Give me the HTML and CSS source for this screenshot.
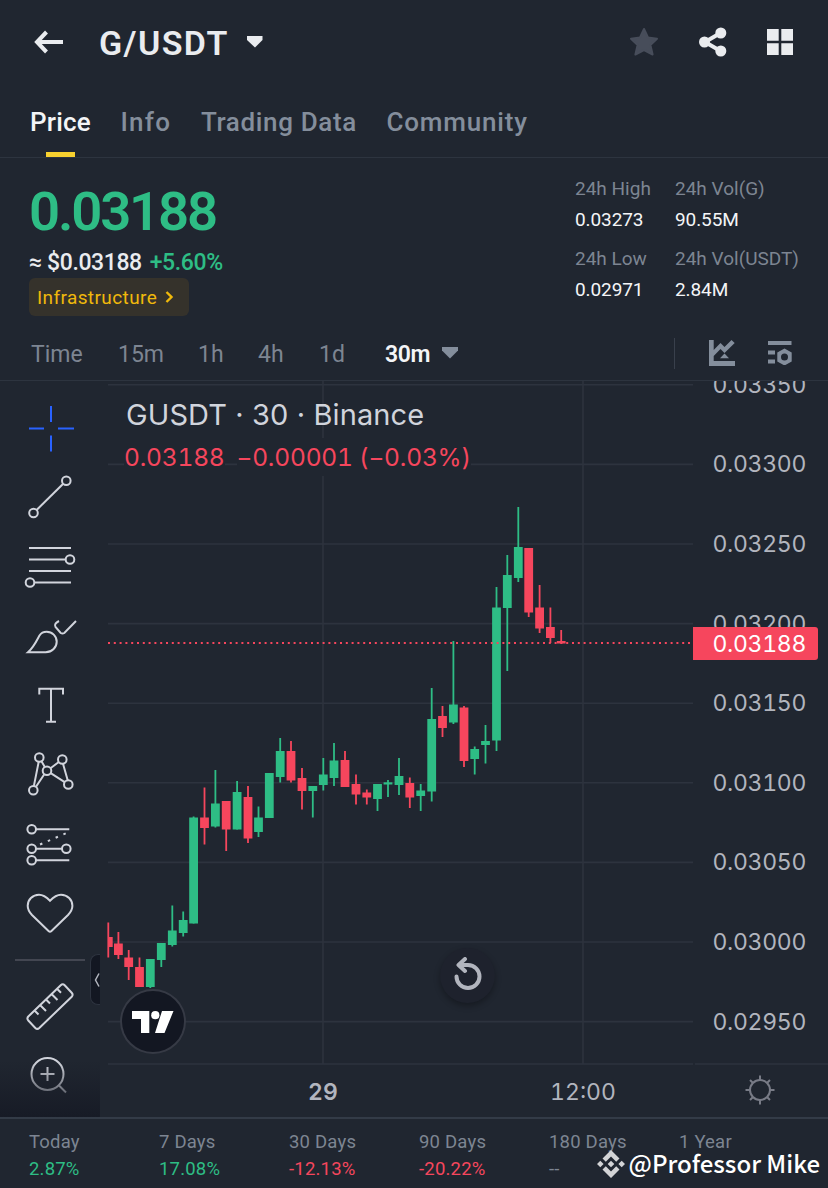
FILE: index.html
```html
<!doctype html>
<html lang="en">

<head>
	<meta charset="UTF-8" />
	<meta name="viewport" content="width=device-width, initial-scale=1.0" />
	<title>G/USDT</title>
	<link rel="stylesheet" href="styles.css">
</head>

<body>
	<header class="header">
		<svg class="back" width="30" height="24" viewBox="0 0 30 24">
			<path d="M29 12H3M12.500 2L3 12l9.500 10" />
		</svg>
		<h1>G/USDT</h1>
		<svg class="caret" width="16" height="12" viewBox="0 0 16 12">
			<path d="M0 0h15.500v4L8 11.500 0 4z" />
		</svg>
		<div class="header-icons">
			<svg width="30" height="30" viewBox="0 0 30 30">
				<path class="star" d="M15 2l4 8.500 9 1.200-6.600 6.300 2.200 9.500L15 23l-8.600 4.500L8.600 18 2 11.700l9-1.200z" />
			</svg>
			<svg width="30" height="30" viewBox="0 0 30 30">
				<path class="share-line" d="M22.500 6L7 15l15.500 9" />
				<circle cx="22.800" cy="6" r="5.500" />
				<circle cx="6.500" cy="15" r="5.500" />
				<circle cx="22.800" cy="24" r="5.500" />
			</svg>
			<svg width="26" height="26" viewBox="0 0 26 26">
				<path d="M0 0h11.700v11.700H0zM14.300 0H26v11.700H14.300zM0 14.300h11.700V26H0zM14.300 14.300H26V26H14.300z" />
			</svg>
		</div>
	</header>

	<nav class="tabs">
		<a class="tab active">Price</a>
		<a class="tab info">Info</a>
		<a class="tab trading">Trading Data</a>
		<a class="tab community">Community</a>
	</nav>

	<section class="summary">
		<div class="quote">
			<div class="price">0.03188</div>
			<div class="approx"><span class="usd">≈ $0.03188</span><span class="change">+5.60%</span></div>
			<a class="tag">
				<span>Infrastructure</span>
				<svg width="9" height="12" viewBox="0 0 9 12">
					<path d="M1.500 1l5 5-5 5" />
				</svg>
			</a>
		</div>
		<dl class="stats">
			<div><dt>24h High</dt><dd>0.03273</dd></div>
			<div><dt>24h Vol(G)</dt><dd>90.55M</dd></div>
			<div><dt>24h Low</dt><dd>0.02971</dd></div>
			<div><dt>24h Vol(USDT)</dt><dd>2.84M</dd></div>
		</dl>
	</section>

	<div class="intervals">
		<span class="i-time">Time</span>
		<span class="i-15">15m</span>
		<span class="i-1h">1h</span>
		<span class="i-4h">4h</span>
		<span class="i-1d">1d</span>
		<span class="selected">30m</span>
		<svg class="caret" width="16" height="12" viewBox="0 0 16 12">
			<path d="M0 0h16v3.500L8 11.500 0 3.500z" />
		</svg>
		<div class="chart-options">
			<svg width="26" height="26" viewBox="0 0 26 26">
				<path d="M0 0h4.700v10L11.500 3l4 4L22.500 0l3.200 3L15.500 13l-4-4L4.700 16v5H26v5H0z" />
				<path d="M15.500 13.500l4.500 4.800h-9z" />
			</svg>
			<svg width="24" height="24" viewBox="0 0 24 24">
				<path d="M0 0h23.500v4H0zM0 9.500h7v4H0zM0 18.500h7v4H0z" />
				<path fill-rule="evenodd" d="M16.500 7.500l7.200 4v9l-7.200 4-7.200-4v-9zM16.500 12.500a3.500 3.500 0 1 0 0 7 3.500 3.500 0 0 0 0-7z" />
			</svg>
		</div>
	</div>

	<main class="chart">
		<aside class="tools">
			<svg class="tool cross" viewBox="0 0 60 60"><path d="M9 30.500h15M38 30.500h16M31 8v16M31 37.500v16" /></svg>
			<svg class="tool" viewBox="0 0 60 60">
				<path d="M16.600 43L43.200 16.800" />
				<circle cx="46.300" cy="13.700" r="4.300" />
				<circle cx="13.500" cy="46" r="4.300" />
			</svg>
			<svg class="tool" viewBox="0 0 60 60">
				<path d="M9 11h42M9 22.500h36.700M9 34h42M14.300 45.500H51" />
				<circle cx="50" cy="22.500" r="4.300" />
				<circle cx="10" cy="45.500" r="4.300" />
			</svg>
			<svg class="tool" viewBox="0 0 60 60">
				<path d="M8 46.300C14 41 17 34 19.500 29.500 21 27 23.500 25.700 26.700 25.700c5.500 0 10 4.500 10 10s-4.500 10.600-11 10.600zM39 15c-3 1.500-5 3.500-3.500 6l5.200 6q1.800 1.200 3.600 0L56 15" />
			</svg>
			<svg class="tool" viewBox="0 0 60 60"><path d="M19.300 19.500v-5.800H43v5.800M31 13.700v33M26 46.700h10" /></svg>
			<svg class="tool" viewBox="0 0 60 60">
				<path d="M21.500 17.200l3.300 5.900M30.500 24.300l8.300-6.300M43 19.800l4.700 16.400M30.700 29.100l14 9.100M24.300 30.300l-8.300 12.500M18.700 17.800l-4.800 24.100" />
				<circle cx="19.300" cy="13.500" r="4.300" />
				<circle cx="42.300" cy="15.500" r="4.300" />
				<circle cx="27" cy="26.800" r="4.300" />
				<circle cx="48.300" cy="40.500" r="4.300" />
				<circle cx="13.300" cy="46.200" r="4.300" />
			</svg>
			<svg class="tool" viewBox="0 0 60 60">
				<path d="M16 15.300h33.300M16 34.700h26M16 46.300h33.300" />
				<path stroke-dasharray="2.500 6" d="M45.700 19.300L19 31" />
				<circle cx="11.700" cy="15.300" r="4.300" />
				<circle cx="11.700" cy="34.700" r="4.300" />
				<circle cx="46.300" cy="34.700" r="4.300" />
				<circle cx="11.700" cy="46.300" r="4.300" />
			</svg>
			<svg class="tool" viewBox="0 0 60 60">
				<path d="M30 17.700C26 13.500 23 11.700 19 11.700c-6.500 0-11.300 5-11.300 11 0 4 1.500 6.300 4.300 9.300l16.500 16q1.500 1.200 3 0L48 32c2.800-3 4.400-5.300 4.400-9.300 0-6-4.900-11-11.400-11-4 0-7 1.800-11 6z" />
			</svg>
			<hr>
			<svg class="tool" viewBox="0 0 60 60">
				<path d="M40.700 9.300q2-2 4 0l7 7.500q1.800 2 0 4L19.300 52q-2 1.800-4 0l-7-7.500q-1.800-2 0-4zM14.500 34.500l4 4M20 29l6 6M26 23.500l4 4M31.500 18l6 6M37 12.700l4 4" />
			</svg>
			<svg class="tool" viewBox="0 0 60 60">
				<circle cx="27.500" cy="29" r="16" />
				<path d="M27.500 22v14M20.500 29h14M39 40.500l7 7" />
			</svg>
			<div class="collapse">
				<svg width="6" height="14" viewBox="0 0 6 14"><path d="M5 .5L1.500 7 5 13.500" /></svg>
			</div>
		</aside>

		<div class="plot">
			<svg class="plot-svg" width="728" height="736" viewBox="100 381 728 736">
				<g id="grid" class="grid"></g>
				<g id="candles"></g>
				<path class="last-line" d="M108 643h585" />
				<g id="price-axis" class="axis"></g>
				<path class="last-tag" d="M693 627h122q3 0 3 3v27q0 3-3 3H693z" />
				<text class="axis last-value" x="712.500" y="651.500">0.03188</text>
				<text class="axis time bold" x="323" y="1100">29</text>
				<text class="axis time" x="583" y="1100">12:00</text>
				<g class="settings" transform="translate(760 1090)">
					<circle r="10" />
					<path d="M0-10v-4.500M0 10v4.500M-10 0h-4.500M10 0h4.500M-7-7l-3-3M7-7l3-3M-7 7l-3 3M7 7l3 3" />
				</g>
			</svg>
			<div class="legend">
				<div class="legend-title">GUSDT · 30 · Binance</div>
				<div class="legend-values"><span>0.03188</span><span>−0.00001 (−0.03%)</span></div>
			</div>
			<div class="tv-logo">
				<svg width="42" height="22" viewBox="0 0 42 22">
					<path d="M0 0h17.300v22H9V8H0zM30 0h11.500L32.500 22h-9.500z" />
					<circle cx="23.300" cy="4.200" r="4.100" />
				</svg>
			</div>
			<div class="reset">
				<svg width="32" height="36" viewBox="0 0 32 36">
					<path d="M4.500 19.500A11.500 11.500 0 1 0 16 8H7M13 2L6.500 8l6.500 6" />
				</svg>
			</div>
		</div>
	</main>

	<footer class="performance">
		<div class="up"><span>Today</span><b>2.87%</b></div>
		<div class="up"><span>7 Days</span><b>17.08%</b></div>
		<div class="down"><span>30 Days</span><b>-12.13%</b></div>
		<div class="down"><span>90 Days</span><b>-20.22%</b></div>
		<div><span>180 Days</span><b>--</b></div>
		<div><span>1 Year</span><b>--</b></div>
		<div class="watermark">
			<svg width="28" height="28" viewBox="0 0 28 28">
				<path d="M14 0l8.500 8.500-3.300 3.300L14 6.600l-5.200 5.200-3.300-3.300zM3.300 10.700L6.600 14l-3.300 3.300L0 14zM24.700 10.700L28 14l-3.300 3.300-3.300-3.300zM14 10.700l3.300 3.300-3.300 3.300-3.300-3.300zM8.800 16.200l5.200 5.200 5.200-5.200 3.300 3.300L14 28l-8.500-8.500z" />
			</svg>
			<span>@Professor Mike</span>
		</div>
	</footer>

	<script>
		// x, high, body top, body bottom, low, direction
		const candles = [
			[108.3, 922.5, 937, 947, 957.5, 0],
			[118.4, 932, 943.5, 955, 959, 0],
			[128.7, 950, 957.5, 967, 980, 0],
			[139.5, 957.5, 967, 987, 987, 0],
			[150.3, 959, 959, 987, 988, 1],
			[161.3, 943, 943, 960, 967, 1],
			[172.3, 905.5, 930.5, 945, 946.5, 1],
			[183.2, 911.5, 920, 933, 936.5, 1],
			[193.6, 816.5, 817.5, 923.5, 923.5, 1],
			[204.5, 787.5, 817.5, 828, 844.5, 0],
			[215.4, 770, 803.5, 826.5, 827.5, 1],
			[226.2, 801, 801, 829.5, 851, 0],
			[237.1, 781, 792, 829.5, 829.5, 1],
			[248, 786, 797, 838.5, 843, 0],
			[258.5, 806.5, 817.5, 832, 837, 1],
			[269.3, 773, 773, 818, 818, 1],
			[280.2, 738, 751, 777, 782.5, 1],
			[291, 741, 751, 780.5, 782.5, 0],
			[302, 768, 778, 791, 809.5, 0],
			[312.8, 786, 786, 791, 817.5, 1],
			[323.3, 758, 774.5, 785, 790.5, 1],
			[334, 743, 760.5, 778, 786, 1],
			[345, 751, 760, 787, 787, 0],
			[356, 774.5, 784, 794.5, 804.5, 0],
			[366.8, 789.5, 792.5, 797.5, 804.5, 0],
			[377.5, 784, 784, 799, 811, 1],
			[388, 780, 782.3, 784.5, 797, 1],
			[399, 758, 776, 785, 795, 1],
			[409.8, 777.5, 783, 797.5, 808, 0],
			[420.7, 784, 790.5, 796, 811, 1],
			[431.7, 688, 719, 791.5, 801.5, 1],
			[442.5, 706, 716, 728, 737, 0],
			[453.4, 641, 704.5, 722.5, 724, 1],
			[464, 706, 707.5, 761, 767, 0],
			[474.7, 746.5, 749, 759, 774.5, 1],
			[485.5, 725, 741, 745, 763.5, 1],
			[496.5, 587, 607.5, 740.5, 751, 1],
			[507.3, 555, 575, 608, 671, 1],
			[518.3, 507, 547, 578, 582, 1],
			[528.7, 548, 548, 612.5, 617, 0],
			[539.6, 585, 607.5, 628.5, 633, 0],
			[550.4, 607.5, 627, 638, 643, 0],
			[561.2, 630, 641, 643.5, 643.5, 0]
		];

		document.getElementById('candles').innerHTML = candles.map(([x, high, top, bottom, low, up]) => {
			const left = Math.max(x - 4.4, 108);
			return `<g class="${up ? 'candle-up' : 'candle-down'}">
				<rect x="${x - 0.9}" y="${high}" width="1.8" height="${low - high}" />
				<rect x="${left}" y="${top}" width="${x + 4.4 - left}" height="${bottom - top}" />
			</g>`;
		}).join('');

		const prices = ['0.03350', '0.03300', '0.03250', '0.03200', '0.03150', '0.03100', '0.03050', '0.03000', '0.02950'];
		const step = 79.6;
		let lines = '';
		let labels = '';
		prices.forEach((price, i) => {
			const y = 384.8 + i * step;
			lines += `<path d="M108 ${y}h585" />`;
			labels += `<text x="712.5" y="${y + 8}">${price}</text>`;
		});
		lines += '<path d="M323 381v683M583 381v683M108 1064h585M695 1064h133" />';
		document.getElementById('grid').innerHTML = lines;
		document.getElementById('price-axis').innerHTML = labels;
	</script>
</body>

</html>
```
FILE: styles.css
```css
* {
	margin: 0;
	padding: 0;
	box-sizing: border-box;
}

body {
	width: 828px;
	height: 1188px;
	overflow: hidden;
	background-color: #202630;
	color: #eaecef;
	font-family: Roboto, "Liberation Sans", sans-serif;
}

svg {
	display: block;
	flex: none;
}

.header {
	height: 84px;
	padding: 0 35px 0 34px;
	display: flex;
	align-items: center;
	fill: #eaecef;
}

.back {
	fill: none;
	stroke: #eaecef;
	stroke-width: 4;
}

h1 {
	width: 148px;
	margin-left: 35px;
	padding-top: 2px;
	font-size: 34px;
	font-weight: 600;
	letter-spacing: 1.4px;
	white-space: nowrap;
}

.header-icons {
	margin-left: auto;
	display: flex;
	align-items: center;
	gap: 39px;
}

.star {
	fill: #474d5a;
	stroke: #474d5a;
	stroke-width: 2;
	stroke-linejoin: round;
}

.share-line {
	fill: none;
	stroke: #eaecef;
	stroke-width: 4;
}

.tabs {
	height: 74px;
	padding-left: 30px;
	display: flex;
	gap: 29.5px;
	border-bottom: 1px solid #2d343f;
}

.tab {
	position: relative;
	height: 73px;
	line-height: 77px;
	font-size: 26px;
	font-weight: 500;
	letter-spacing: 0.65px;
	color: #848e9c;
	white-space: nowrap;
}

.tab.active {
	letter-spacing: 0.2px;
	color: #f4f5f7;
}

.tab.info {
	letter-spacing: 1.3px;
}

.tab.community {
	letter-spacing: 0.8px;
}

.tab.active::after {
	content: "";
	position: absolute;
	left: 50%;
	bottom: 0;
	width: 29px;
	height: 5px;
	margin-left: -14px;
	background-color: #f8d12f;
}

.summary {
	height: 168px;
	padding-left: 29px;
	display: flex;
	justify-content: space-between;
}

.price {
	margin-top: 21px;
	height: 64px;
	line-height: 64px;
	font-size: 54.5px;
	font-weight: 600;
	letter-spacing: -2.2px;
	color: #2ebd85;
}

.approx {
	height: 35px;
	line-height: 40px;
	font-size: 23px;
	font-weight: 500;
	letter-spacing: -0.4px;
	display: flex;
	gap: 8px;
}

.change {
	color: #2ebd85;
}

.tag {
	width: 160px;
	height: 38px;
	padding-left: 8px;
	display: flex;
	align-items: center;
	gap: 8px;
	border-radius: 6px;
	background-color: #35322b;
	color: #f0b90b;
	font-size: 19px;
	letter-spacing: 0.4px;
}

.tag svg {
	fill: none;
	stroke: #f0b90b;
	stroke-width: 2.4;
}

.stats {
	width: 253px;
	padding-top: 18px;
	display: grid;
	grid-template-columns: 100px 153px;
	grid-auto-rows: 69.5px;
	font-size: 19px;
	white-space: nowrap;
}

.stats dt {
	height: 29px;
	line-height: 26px;
	color: #7d8592;
}

.stats dd {
	line-height: 30px;
	letter-spacing: -0.1px;
	color: #f4f5f7;
}

.intervals {
	height: 55px;
	padding: 0 36px 0 31px;
	display: flex;
	align-items: center;
	border-bottom: 1px solid #2d343f;
	font-size: 23px;
	color: #7d8592;
	fill: #848e9c;
}

.intervals span {
	padding-top: 2px;
}

.i-time {
	width: 87px;
}

.i-15 {
	width: 80px;
}

.i-1h {
	width: 60px;
}

.i-4h {
	width: 61px;
}

.i-1d {
	width: 66px;
}

.selected {
	width: 57px;
	font-weight: 600;
	letter-spacing: -0.4px;
	color: #f4f5f7;
}

.chart-options {
	height: 31px;
	margin-left: auto;
	padding-left: 34px;
	display: flex;
	align-items: center;
	gap: 33px;
	border-left: 1px solid #39404c;
}

.chart {
	height: 736px;
	display: grid;
	grid-template-columns: 100px 728px;
}

.tools {
	position: relative;
	padding-top: 17px;
	display: flex;
	flex-direction: column;
	align-items: center;
	gap: 9.3px;
}

.tool {
	width: 60px;
	height: 60px;
	fill: none;
	stroke: #d1d4dc;
	stroke-width: 2;
}

.tools .cross {
	stroke: #2962ff;
}

.tools hr {
	width: 70px;
	height: 2px;
	margin: 7px 0 5.5px;
	border: 0;
	background-color: #434651;
}

.tools::after {
	content: "";
	position: absolute;
	left: 0;
	right: 0;
	bottom: 0;
	height: 56px;
	background: linear-gradient(rgba(19, 23, 34, 0), #171b26);
}

.collapse {
	position: absolute;
	top: 573px;
	right: 0;
	width: 10px;
	height: 51px;
	padding: 18px 0 0 3px;
	border: 1px solid #2d333f;
	border-right: 0;
	border-radius: 8px 0 0 8px;
	background-color: #131722;
}

.collapse svg {
	fill: none;
	stroke: #b2b5be;
	stroke-width: 1.5;
}

.plot {
	position: relative;
}

.grid {
	fill: none;
	stroke: #2d333e;
	stroke-width: 1.6;
}

.candle-up {
	fill: #2ebd85;
}

.candle-down {
	fill: #f6465d;
}

.last-line {
	stroke: #f6465d;
	stroke-width: 1.8;
	stroke-dasharray: 2 3.8;
}

.axis {
	font-family: Inter, "Liberation Sans", sans-serif;
	font-size: 23px;
	font-variant-numeric: tabular-nums;
	letter-spacing: -0.3px;
	fill: #b2b5be;
}

.last-tag {
	fill: #f6465d;
}

.last-value {
	fill: #fff;
}

.time {
	letter-spacing: 0;
	text-anchor: middle;
}

.bold {
	font-weight: 600;
}

.settings {
	fill: none;
	stroke: #787b86;
	stroke-width: 2;
}

.legend {
	position: absolute;
	top: 13px;
	left: 26px;
	font-family: Inter, "Liberation Sans", sans-serif;
	white-space: nowrap;
}

.legend-title {
	height: 44px;
	line-height: 41px;
	font-size: 29px;
	letter-spacing: 0.1px;
	color: #d1d4dc;
}

.legend-values {
	display: flex;
	gap: 12px;
	margin-left: -2px;
	line-height: 38px;
	font-size: 24.5px;
	font-variant-numeric: tabular-nums;
	letter-spacing: -0.2px;
	color: #f6465d;
}

.legend-values span {
	background-color: #202630;
}

.tv-logo {
	position: absolute;
	top: 608px;
	left: 20px;
	width: 66px;
	height: 65px;
	display: flex;
	align-items: center;
	justify-content: center;
	border: 2px solid #363a45;
	border-radius: 50%;
	background-color: #131722;
	fill: #fff;
}

.reset {
	position: absolute;
	top: 567px;
	left: 340px;
	width: 55px;
	height: 55px;
	display: flex;
	align-items: center;
	justify-content: center;
	border-radius: 50%;
	background-color: #1e222d;
	box-shadow: 0 3px 6px rgba(0, 0, 0, 0.3);
}

.reset svg {
	margin-top: -2px;
	fill: none;
	stroke: #b2b5be;
	stroke-width: 4;
	stroke-linecap: round;
	stroke-linejoin: round;
}

.performance {
	position: relative;
	height: 71px;
	padding: 10px 0 0 29px;
	display: grid;
	grid-template-columns: repeat(6, 130px);
	border-top: 2px solid #333b47;
	font-size: 18.5px;
	letter-spacing: 0.2px;
	color: #7d8592;
	white-space: nowrap;
}

.performance span,
.performance b {
	display: block;
	line-height: 27px;
	font-weight: 400;
}

.performance .up b {
	color: #2ebd85;
}

.performance .down b {
	color: #f6465d;
}

.performance .watermark {
	position: absolute;
	right: 8px;
	bottom: 7px;
	display: flex;
	align-items: center;
	gap: 4px;
	fill: #d3d4d6;
}

.performance .watermark span {
	margin-top: -2px;
	font-family: "Noto Sans CJK SC", "Noto Sans", sans-serif;
	font-size: 24px;
	font-weight: 500;
	line-height: 36px;
	letter-spacing: 0;
	color: #fff;
}
```
